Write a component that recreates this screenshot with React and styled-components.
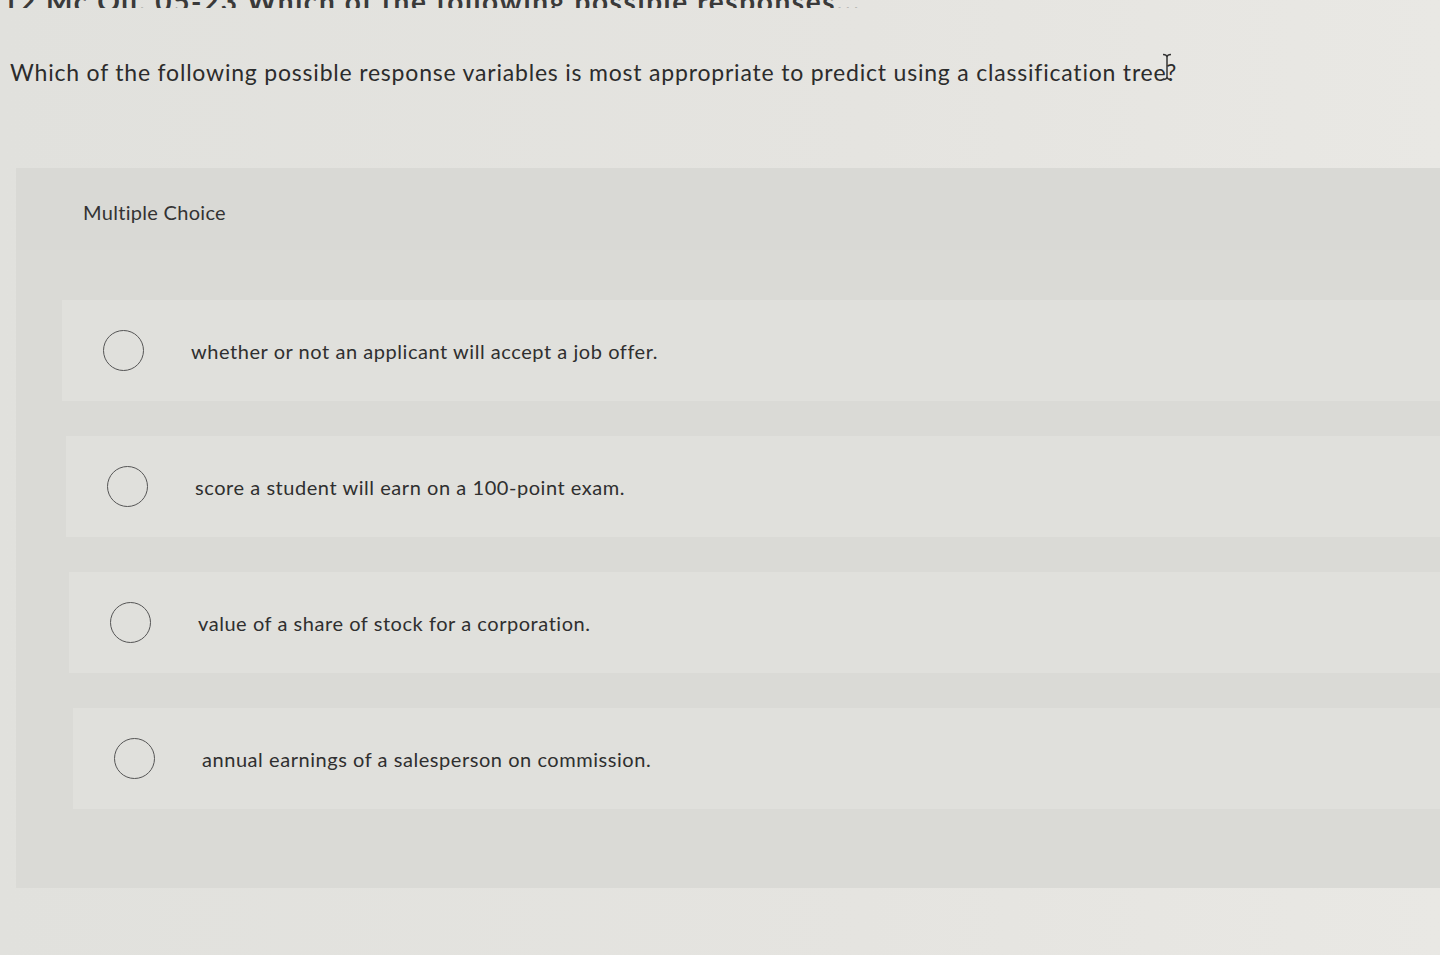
import React from 'react';
import styled, { createGlobalStyle } from 'styled-components';

const GlobalStyle = createGlobalStyle`
  html, body {
    margin: 0;
    padding: 0;
    background: #e3e3df;
  }
  body {
    font-family: Lato, "Open Sans", sans-serif;
    color: #2f2f2f;
  }
`;

const options = [
  { text: 'whether or not an applicant will accept a job offer.', indent: 0 },
  { text: 'score a student will earn on a 100-point exam.', indent: 4 },
  { text: 'value of a share of stock for a corporation.', indent: 7 },
  { text: 'annual earnings of a salesperson on commission.', indent: 11 },
];

const App = () => {
  return (
    <Page>
      <GlobalStyle />
      <CutTitle>12 Mc Qu. 05-23 Which of the following possible responses...</CutTitle>
      <Question>
        Which of the following possible response variables is most appropriate to predict using a
        classification tree?
        <Cursor viewBox='0 0 12 28' aria-hidden='true'>
          <path
            d='M2 1.5q4 0 4 3q0-3 4-3M6 4.5v19M2 26.5q4 0 4-3q0 3 4 3'
            stroke='#333'
            strokeWidth='1.5'
            fill='none'
          />
        </Cursor>
      </Question>
      <Panel>
        <PanelHead>Multiple Choice</PanelHead>
        <OptionList>
          {options.map((o) => (
            <Option key={o.text} $indent={o.indent}>
              <Radio />
              <OptionText>{o.text}</OptionText>
            </Option>
          ))}
        </OptionList>
      </Panel>
    </Page>
  );
};

export default App;

const Page = styled.div`
  width: 1440px;
  height: 955px;
  overflow: hidden;
  background: linear-gradient(90deg, #e1e1dd 0%, #e5e4e0 60%, #e9e8e4 100%);
`;

const CutTitle = styled.div`
  margin-top: -16px;
  height: 24px;
  padding-left: 2px;
  font-size: 28px;
  font-weight: 700;
  letter-spacing: 1.6px;
  color: #3a3a3a;
  white-space: nowrap;
  overflow: hidden;
`;

const Question = styled.h1`
  position: relative;
  margin: 50px 0 0 10px;
  font-size: 23px;
  font-weight: 400;
  letter-spacing: 0.8px;
  color: #2c2c2c;
  white-space: nowrap;
`;

const Cursor = styled.svg`
  position: absolute;
  left: 1151px;
  top: -5px;
  width: 12px;
  height: 28px;
`;

const Panel = styled.section`
  margin: 82px 0 0 16px;
  height: 720px;
  background: #d8d8d4;
  display: flex;
  flex-direction: column;
`;

const PanelHead = styled.div`
  height: 82px;
  padding: 32px 0 0 67px;
  box-sizing: border-box;
  font-size: 20px;
  letter-spacing: 0.3px;
  color: #333;
  background: #d9d9d5;
`;

const OptionList = styled.div`
  display: flex;
  flex-direction: column;
  gap: 35px;
  padding: 50px 0 0 46px;
  background: #dadad6;
  flex: 1;
`;

const Option = styled.div`
  display: flex;
  align-items: center;
  height: 101px;
  padding-left: 41px;
  margin-left: ${(p) => p.$indent}px;
  background: #e0e0dc;
`;

const Radio = styled.span`
  width: 41px;
  height: 41px;
  border: 1.8px solid #555;
  border-radius: 50%;
  box-sizing: border-box;
  flex-shrink: 0;
`;

const OptionText = styled.span`
  margin-left: 47px;
  font-size: 20px;
  letter-spacing: 0.55px;
  color: #2f2f2f;
`;
